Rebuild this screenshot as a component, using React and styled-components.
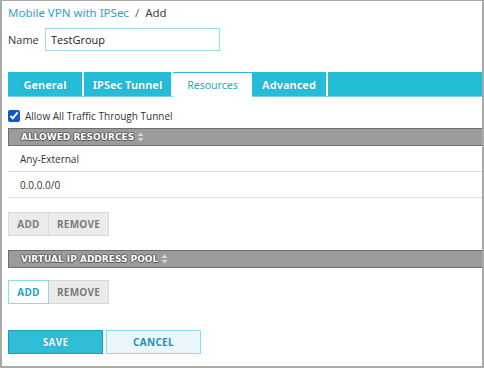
import React from 'react';
import styled, { createGlobalStyle } from 'styled-components';

const GlobalStyle = createGlobalStyle`
  html, body {
    margin: 0;
    padding: 0;
    background: #ffffff;
  }
  * {
    box-sizing: border-box;
  }
`;

const Frame = styled.div`
  width: 484px;
  height: 368px;
  border: 1px solid #a9a9a9;
  border-left-width: 2px;
  border-right-width: 2px;
  border-bottom-width: 2px;
  background: #ffffff;
  font-family: 'Open Sans', 'Liberation Sans', sans-serif;
  color: #333333;
  overflow: hidden;
`;

const Padded = styled.div`
  padding-left: 6px;
`;

const Breadcrumb = styled.div`
  height: 21px;
  display: flex;
  align-items: center;
  gap: 6px;
  font-family: 'Noto Sans', 'Open Sans', sans-serif;
  font-size: 11.5px;
  padding-top: 1px;
`;

const Crumb = styled.span`
  color: ${(p) => (p.link ? '#2aa5c6' : '#444444')};
`;

const Sep = styled.span`
  color: #666666;
`;

const NameRow = styled.div`
  display: flex;
  align-items: center;
  margin-top: 6px;
  gap: 8px;
`;

const Label = styled.label`
  font-size: 11px;
  color: #333333;
  width: 29px;
`;

const TextInput = styled.input`
  width: 175px;
  height: 23px;
  border: 1px solid #9ddbe8;
  padding: 0 5px;
  font-family: 'Open Sans', 'Liberation Sans', sans-serif;
  font-size: 11px;
  color: #222222;
  outline: none;
`;

const TabBar = styled.div`
  display: flex;
  height: 25px;
  margin-top: 21px;
  border-bottom: 1px solid #7fd2e3;
`;

const Tab = styled.div`
  width: ${(p) => p.w}px;
  display: flex;
  align-items: center;
  justify-content: center;
  margin-right: ${(p) => (p.active ? 0 : 2)}px;
  font-family: 'Noto Sans', 'Open Sans', sans-serif;
  font-size: ${(p) => (p.active ? 10.5 : 11)}px;
  font-weight: ${(p) => (p.active ? 400 : 700)};
  color: ${(p) => (p.active ? '#2aa5c6' : '#ffffff')};
  background: ${(p) => (p.active ? '#ffffff' : '#24bcd7')};
  border-top: 1px solid #24bcd7;
  text-shadow: ${(p) => (p.active ? 'none' : '0 0 1px #0c7f98')};
  margin-bottom: ${(p) => (p.active ? -1 : 0)}px;
`;

const TabFill = styled.div`
  flex: 1;
  background: #24bcd7;
  border-top: 1px solid #24bcd7;
`;

const CheckRow = styled.label`
  display: flex;
  align-items: center;
  gap: 5px;
  height: 14px;
  margin-top: 12px;
  font-size: 10px;
  color: #333333;
`;

const Check = styled.input`
  margin: 0;
  width: 12px;
  height: 12px;
  accent-color: #1457c8;
`;

const GridHeader = styled.div`
  display: flex;
  align-items: center;
  gap: 3px;
  height: 18px;
  margin-top: ${(p) => p.top}px;
  padding-left: 12px;
  background: #9b9b9b;
  border-top: 1px solid #6f6f6f;
  border-bottom: 1px solid #707070;
  border-left: 1px solid #6f6f6f;
  font-family: 'DejaVu Sans', 'Verdana', sans-serif;
  font-size: 9px;
  font-weight: 700;
  color: #ffffff;
  text-shadow: 1px 0 0 #555555, -1px 0 0 #555555, 0 1px 0 #555555,
    0 -1px 0 #666666;
`;

const SortIcon = () => (
  <svg width="7" height="10" viewBox="0 0 7 10">
    <path d="M3.5 0.5 L6.5 4 L0.5 4 Z" fill="#d8d8d8" />
    <path d="M3.5 9.5 L6.5 6 L0.5 6 Z" fill="#d8d8d8" />
  </svg>
);

const GridRow = styled.div`
  height: 26px;
  display: flex;
  align-items: center;
  padding-left: 12px;
  border-bottom: 1px solid #dedede;
  font-size: 10px;
  color: #333333;
`;

const ButtonGroup = styled.div`
  display: flex;
  margin-top: ${(p) => p.top}px;
`;

const GroupButton = styled.button`
  height: 24px;
  width: ${(p) => p.w}px;
  padding: 0;
  font-family: 'Open Sans', 'Liberation Sans', sans-serif;
  font-size: 10px;
  font-weight: 700;
  letter-spacing: 0.2px;
  color: ${(p) => (p.primary ? '#1ea3c4' : '#7a7a7a')};
  background: ${(p) => (p.primary ? '#ffffff' : '#ebebeb')};
  border: 1px solid ${(p) => (p.primary ? '#8fdbe9' : '#d8d8d8')};
  & + & {
    border-left: none;
  }
`;

const Footer = styled.div`
  display: flex;
  gap: 3px;
  margin-top: 26px;
`;

const FootButton = styled.button`
  width: 95px;
  height: 24px;
  padding: 0;
  font-family: 'Open Sans', 'Liberation Sans', sans-serif;
  font-size: 10px;
  font-weight: 700;
  letter-spacing: 0.3px;
  color: ${(p) => (p.primary ? '#ffffff' : '#1e8fb0')};
  background: ${(p) => (p.primary ? '#2ebcd6' : '#e9f6fb')};
  border: 1px solid ${(p) => (p.primary ? '#1b9fb9' : '#8adcec')};
  text-shadow: ${(p) => (p.primary ? '0 0 1px #0d7c95' : 'none')};
`;

const tabs = [
  { name: 'General', w: 74 },
  { name: 'IPSec Tunnel', w: 87 },
  { name: 'Resources', w: 79, active: true },
  { name: 'Advanced', w: 74 },
];

export default function App() {
  return (
    <>
      <GlobalStyle />
      <Frame>
        <Padded>
          <Breadcrumb>
            <Crumb link>Mobile VPN with IPSec</Crumb>
            <Sep>/</Sep>
            <Crumb>Add</Crumb>
          </Breadcrumb>
          <NameRow>
            <Label>Name</Label>
            <TextInput defaultValue="TestGroup" />
          </NameRow>
          <TabBar>
            {tabs.map((t) => (
              <Tab key={t.name} w={t.w} active={t.active}>
                {t.name}
              </Tab>
            ))}
            <TabFill />
          </TabBar>
          <CheckRow>
            <Check type="checkbox" defaultChecked />
            Allow All Traffic Through Tunnel
          </CheckRow>
          <GridHeader top={5}>
            ALLOWED RESOURCES <SortIcon />
          </GridHeader>
          <GridRow>Any-External</GridRow>
          <GridRow>0.0.0.0/0</GridRow>
          <ButtonGroup top={14}>
            <GroupButton w={41}>ADD</GroupButton>
            <GroupButton w={60}>REMOVE</GroupButton>
          </ButtonGroup>
          <GridHeader top={14}>
            VIRTUAL IP ADDRESS POOL <SortIcon />
          </GridHeader>
          <ButtonGroup top={12}>
            <GroupButton w={41} primary>ADD</GroupButton>
            <GroupButton w={60}>REMOVE</GroupButton>
          </ButtonGroup>
          <Footer>
            <FootButton primary>SAVE</FootButton>
            <FootButton>CANCEL</FootButton>
          </Footer>
        </Padded>
      </Frame>
    </>
  );
}
